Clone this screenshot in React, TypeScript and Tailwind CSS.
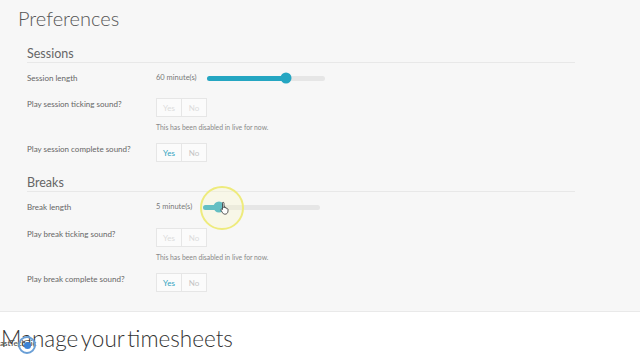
import React from "react";

const font = { fontFamily: "Lato, 'Open Sans', sans-serif" };

function Toggle({ active, disabled }: { active?: boolean; disabled?: boolean }) {
  return (
    <div className="flex h-[19px] border border-[#e6e6e6] bg-[#fbfbfb] text-[8px]">
      <div
        className={
          "flex w-[25px] items-center justify-center border-r border-[#e6e6e6] " +
          (active ? "text-[#2fa3bf]" : "text-[#dcdcdc]")
        }
      >
        Yes
      </div>
      <div className={"flex w-[24px] items-center justify-center " + (disabled ? "text-[#dcdcdc]" : "text-[#c4c4c4]")}>
        No
      </div>
    </div>
  );
}

function Slider({ width, fill }: { width: number; fill: number }) {
  return (
    <div className="relative h-[5px] rounded-full bg-[#e6e6e6]" style={{ width }}>
      <div className="absolute left-0 top-0 h-[5px] rounded-full bg-[#25a6c2]" style={{ width: fill }} />
      <div
        className="absolute top-1/2 h-[11px] w-[11px] -translate-x-1/2 -translate-y-1/2 rounded-full bg-[#25a6c2]"
        style={{ left: fill }}
      />
    </div>
  );
}

function Label({ children }: { children: React.ReactNode }) {
  return <div className="w-[129px] text-[8px] leading-[12px] text-[#666]">{children}</div>;
}

function Helper() {
  return (
    <div className="ml-[129px] text-[6.8px] leading-[10px] text-[#888]">This has been disabled in live for now.</div>
  );
}

export default function App() {
  return (
    <div className="relative h-[360px] w-[640px] overflow-hidden bg-white" style={font}>
      <div className="border-b border-[#e9e9e9] bg-[#f7f7f7] pb-[19px] pt-[6px]">
        <h1 className="pl-[18px] text-[20px] font-light leading-[24px] text-[#555]">Preferences</h1>

        <div className="ml-[27px] mr-[65px] mt-[15px]">
          <div className="h-[18px] border-b border-[#e8e8e8] text-[12.5px] leading-[18px] text-[#666]">Sessions</div>
          <div className="flex h-[30px] items-center">
            <Label>Session length</Label>
            <div className="w-[51px] text-[7.5px] text-[#777]">60 minute(s)</div>
            <Slider width={118} fill={79} />
          </div>
          <div className="mt-[5px] flex items-start">
            <Label>Play session ticking sound?</Label>
            <Toggle disabled />
          </div>
          <div className="mt-[5px]">
            <Helper />
          </div>
          <div className="mt-[11px] flex items-start">
            <Label>Play session complete sound?</Label>
            <Toggle active />
          </div>

          <div className="mt-[12px] h-[18px] border-b border-[#e8e8e8] text-[12.5px] leading-[18px] text-[#666]">
            Breaks
          </div>
          <div className="relative flex h-[30px] items-center">
            <Label>Break length</Label>
            <div className="w-[47px] text-[7.5px] text-[#777]">5 minute(s)</div>
            <Slider width={117} fill={16} />
            <div className="absolute left-[173px] top-[-6px] h-[44px] w-[44px] rounded-full border-2 border-[#eeeb7c] bg-[#fbf9c8]/30" />
            <svg className="absolute left-[193px] top-[9px]" width="11" height="14" viewBox="0 0 11 14">
              <path
                d="M3 1.2c.6 0 1 .4 1 1V7l.2-1.2c.5-.3 1.3 0 1.3.6v.6c.4-.4 1.2-.2 1.3.4v.5c.4-.3 1.2-.1 1.2.5V10c0 1.8-1.2 3.2-3 3.2H4.8c-1 0-1.7-.5-2.2-1.3L1 9.2c-.3-.5 0-1 .5-1.1.4-.1.8.1 1 .4V2.2c0-.6.2-1 .5-1z"
                fill="#fff"
                stroke="#333"
                strokeWidth="0.8"
                strokeLinejoin="round"
              />
            </svg>
          </div>
          <div className="mt-[6px] flex items-start">
            <Label>Play break ticking sound?</Label>
            <Toggle disabled />
          </div>
          <div className="mt-[5px]">
            <Helper />
          </div>
          <div className="mt-[11px] flex items-start">
            <Label>Play break complete sound?</Label>
            <Toggle active />
          </div>
        </div>
      </div>

      <div className="relative pl-[1px] pt-[14px]">
        <div className="text-[22.5px] font-light leading-[26px] text-[#333] [word-spacing:-3px]">
          Manage your timesheets
        </div>
        <div className="absolute left-0 top-[26px] text-[8px] font-semibold leading-[10px] text-[#555]">astTechnic</div>
        <div className="absolute left-[18px] top-[24px] flex h-[18px] w-[18px] items-center justify-center rounded-full border-2 border-[#6a9fd6]">
          <div className="h-[7px] w-[7px] rounded-full bg-[#3b82d6]" />
        </div>
      </div>
    </div>
  );
}
